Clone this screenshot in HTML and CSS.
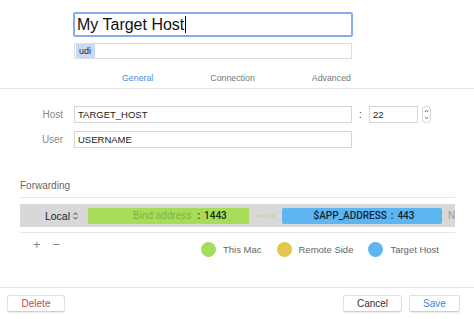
FILE: index.html
```html
<!DOCTYPE html>
<html>
<head>
<meta charset="utf-8">
<link rel="stylesheet" href="styles.css">
</head>
<body>
  <div class="header">
    <div class="title-field"><span>My Target Host</span><span class="caret"></span></div>
    <div class="sub-field"><span class="sel">udi</span></div>
    <div class="tabs">
      <span class="tab active">General</span>
      <span class="tab">Connection</span>
      <span class="tab">Advanced</span>
    </div>
  </div>

  <div class="form">
    <div class="label">Host</div>
    <div class="field">TARGET_HOST</div>
    <div class="colon">:</div>
    <div class="field port">22</div>
    <svg class="stepper" width="9" height="17" viewBox="0 0 9 17">
      <rect x="0.5" y="0.5" width="8" height="16" rx="3" fill="#fff" stroke="#d2d2d2"/>
      <path d="M2.8 6 L4.5 4.3 L6.2 6" fill="none" stroke="#555" stroke-width="0.9"/>
      <path d="M2.8 11 L4.5 12.7 L6.2 11" fill="none" stroke="#555" stroke-width="0.9"/>
    </svg>
    <div class="label">User</div>
    <div class="field">USERNAME</div>
  </div>

  <div class="forwarding">
    <div class="section-title">Forwarding</div>
    <div class="list">
      <div class="band">
        <div class="mode">Local<svg width="7" height="10" viewBox="0 0 7 10"><path d="M1.5 4 L3.5 1.8 L5.5 4" fill="none" stroke="#444" stroke-width="1"/><path d="M1.5 6 L3.5 8.2 L5.5 6" fill="none" stroke="#444" stroke-width="1"/></svg></div>
        <div class="pill green"><span class="ph">Bind address</span><b class="sep">:</b><b>1443</b></div>
        <svg class="conn" width="33" height="8" viewBox="0 0 33 8">
          <path d="M7 4 H14 M20 4 H25" stroke="#b9dc8f" stroke-width="1" fill="none"/>
          <circle cx="17" cy="4" r="2.3" fill="none" stroke="#b9dc8f" stroke-width="1"/>
          <path d="M23 2 L26 4 L23 6" fill="none" stroke="#b9dc8f" stroke-width="1"/>
        </svg>
        <div class="pill blue"><b>$APP_ADDRESS</b><b class="sep">:</b><b>443</b></div>
        <div class="more">N</div>
      </div>
    </div>
    <div class="controls">
      <div class="pm"><span>+</span><span>−</span></div>
      <div class="legend">
        <div class="item"><span class="dot g"></span>This Mac</div>
        <div class="item"><span class="dot y"></span>Remote Side</div>
        <div class="item"><span class="dot b"></span>Target Host</div>
      </div>
    </div>
  </div>

  <div class="footer">
    <button class="btn delete">Delete</button>
    <div class="spacer"></div>
    <button class="btn">Cancel</button>
    <button class="btn save">Save</button>
  </div>
</body>
</html>
```

FILE: styles.css
```css
html, body {
  margin: 0;
  padding: 0;
}
body {
  width: 474px;
  height: 319px;
  overflow: hidden;
  background: #fff;
  font-family: "Liberation Sans", Arial, sans-serif;
  color: #222;
  display: flex;
  flex-direction: column;
}

.header {
  padding: 12px 0 4px 73px;
  border-bottom: 1px solid #e6e6e6;
}
.title-field {
  width: 280px;
  height: 25px;
  box-sizing: border-box;
  border: 2px solid #86acee;
  border-radius: 2px;
  font-size: 16px;
  color: #111;
  padding-left: 2px;
  display: flex;
  align-items: center;
}
.caret {
  display: inline-block;
  width: 1px;
  height: 17px;
  background: #111;
  margin-left: 1px;
}
.sub-field {
  margin-top: 6px;
  margin-left: 1px;
  width: 278px;
  height: 16px;
  box-sizing: border-box;
  border: 1px solid #dedede;
  font-size: 9px;
  padding-left: 1px;
  display: flex;
  align-items: center;
}
.sel {
  background: #c8daf5;
  padding: 2px 4px 2px 3px;
  line-height: 10px;
  color: #222;
}
.tabs {
  margin-top: 13px;
  margin-left: 49px;
  display: flex;
  gap: 57px;
  height: 12px;
  line-height: 12px;
  font-size: 8.8px;
  color: #777;
}
.tab.active {
  color: #4a8ee2;
}

.form {
  padding-top: 17px;
  display: grid;
  grid-template-columns: 52px 11px 278px 17px 49px 4px 9px;
  row-gap: 8px;
  padding-left: 11px;
  align-items: center;
}
.form .label {
  grid-column: 1;
  text-align: right;
  font-size: 10px;
  color: #8a8a8a;
}
.form .field {
  grid-column: 3;
  height: 17px;
  box-sizing: border-box;
  border: 1px solid #d6d6d6;
  font-size: 9.5px;
  color: #222;
  padding-left: 3px;
  display: flex;
  align-items: center;
}
.colon {
  grid-column: 4;
  text-align: center;
  font-size: 10px;
  color: #444;
}
.form .field.port {
  grid-column: 5;
}
.stepper {
  grid-column: 7;
}

.forwarding {
  margin-top: 32px;
  padding: 0 19px 0 20px;
}
.section-title {
  font-size: 10px;
  line-height: 12px;
  color: #666;
  padding-bottom: 5px;
}
.list {
  border-top: 1px solid #e6e6e6;
  border-bottom: 1px solid #e6e6e6;
  padding: 6px 0 5px;
}
.band {
  height: 23px;
  background: #d8d8d8;
  display: flex;
  align-items: center;
  overflow: hidden;
  white-space: nowrap;
}
.mode {
  width: 68px;
  box-sizing: border-box;
  padding-right: 9px;
  font-size: 10.5px;
  color: #222;
  display: flex;
  align-items: center;
  justify-content: flex-end;
  gap: 2px;
  flex: none;
}
.pill {
  height: 16px;
  border-radius: 2px;
  display: flex;
  align-items: center;
  font-size: 10px;
  flex: none;
  box-sizing: border-box;
}
.pill b {
  font-family: Roboto, "Liberation Sans", sans-serif;
  font-weight: 500;
  color: #1d2a1a;
}
.pill .sep {
  margin: 0 4px 0 6px;
}
.pill.green {
  width: 161px;
  background: #a6dc58;
  padding-left: 45px;
}
.ph {
  color: rgba(70, 120, 40, 0.45);
}
.pill.blue {
  width: 160px;
  background: #5db6f1;
  justify-content: center;
  padding-left: 4px;
}
.pill.blue b {
  color: #14263a;
}
.pill.blue .sep {
  margin: 0 4px;
}
.conn {
  flex: none;
}
.more {
  margin-left: 6px;
  font-size: 10px;
  color: #999;
}
.controls {
  display: flex;
  justify-content: space-between;
  padding-top: 9px;
}
.pm {
  display: flex;
  gap: 12px;
  margin-left: 13px;
  font-size: 13px;
  line-height: 8px;
  color: #888;
  margin-top: -1px;
}
.legend {
  display: flex;
  gap: 15px;
  padding-right: 16px;
}
.item {
  display: flex;
  align-items: center;
  gap: 7px;
  font-size: 9.5px;
  color: #666;
}
.dot {
  width: 15px;
  height: 15px;
  border-radius: 50%;
  display: inline-block;
}
.dot.g { background: #a6dc5c; }
.dot.y { background: #e3c64b; }
.dot.b { background: #5db6f1; }

.footer {
  margin-top: auto;
  border-top: 1px solid #e6e6e6;
  padding: 7px 14px 7px 7px;
  display: flex;
  gap: 7px;
}
.spacer { flex: 1; }
.btn {
  height: 17px;
  box-sizing: border-box;
  background: #fff;
  border: 1px solid #e0e0e0;
  border-bottom-color: #cfcfcf;
  border-radius: 3px;
  box-shadow: 0 0.5px 1px rgba(0,0,0,0.08);
  font-family: "Liberation Sans", Arial, sans-serif;
  font-size: 10px;
  color: #333;
  padding: 0;
  width: 59px;
}
.btn.delete { color: #c9454c; width: 58px; }
.btn.save { color: #3a7fe0; width: 51px; }
```
